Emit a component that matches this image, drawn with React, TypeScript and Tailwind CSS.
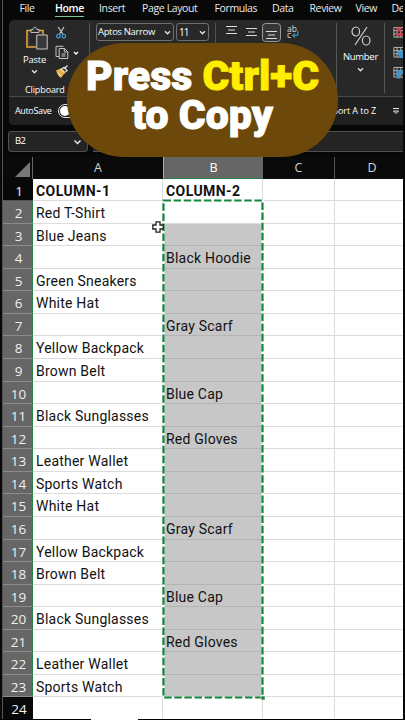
import React from 'react';

const rows: [string, string][] = [
  ['COLUMN-1', 'COLUMN-2'],
  ['Red T-Shirt', ''],
  ['Blue Jeans', ''],
  ['', 'Black Hoodie'],
  ['Green Sneakers', ''],
  ['White Hat', ''],
  ['', 'Gray Scarf'],
  ['Yellow Backpack', ''],
  ['Brown Belt', ''],
  ['', 'Blue Cap'],
  ['Black Sunglasses', ''],
  ['', 'Red Gloves'],
  ['Leather Wallet', ''],
  ['Sports Watch', ''],
  ['White Hat', ''],
  ['', 'Gray Scarf'],
  ['Yellow Backpack', ''],
  ['Brown Belt', ''],
  ['', 'Blue Cap'],
  ['Black Sunglasses', ''],
  ['', 'Red Gloves'],
  ['Leather Wallet', ''],
  ['Sports Watch', ''],
  ['', ''],
];

const Chevron = ({ className = 'h-[5px] w-[7px]' }: { className?: string }) => (
  <svg viewBox="0 0 8 6" className={`shrink-0 ${className}`} fill="none" stroke="#e6e6e6" strokeWidth="1.5">
    <path d="M1 1.5 4 4.5 7 1.5" />
  </svg>
);

const tabs: { label: string; box: string }[] = [
  { label: 'File', box: 'w-[35.5px]' },
  { label: 'Home', box: 'w-[44px] font-semibold' },
  { label: 'Insert', box: 'w-[43px]' },
  { label: 'Page Layout', box: 'w-[72.5px]' },
  { label: 'Formulas', box: 'w-[57.5px]' },
  { label: 'Data', box: 'w-[37.5px]' },
  { label: 'Review', box: 'w-[46px]' },
  { label: 'View', box: 'w-[36px]' },
  { label: 'De', box: 'w-[12px]' },
];

function Tabs() {
  return (
    <nav className="flex h-[20px] pl-[16.5px] text-[10.5px] leading-[17px] tracking-[-0.37px] text-[#e8e8e8]">
      {tabs.map((t) => (
        <div key={t.label} className={`shrink-0 whitespace-nowrap ${t.box}`}>
          <span className={t.label === 'Home' ? 'inline-block h-[17px] border-b border-[#7fc795] text-white' : ''}>
            {t.label}
          </span>
        </div>
      ))}
    </nav>
  );
}

function PasteIcon() {
  return (
    <svg viewBox="0 0 22 25" className="h-[25px] w-[22px]" fill="none">
      <path d="M1 4.5h5M12 4.5h5v4M1 4v17h9" stroke="#e8a33d" strokeWidth="1.6" />
      <path d="M3 6v13h7V9h5V6" stroke="#3a3a3a" />
      <path d="M5 6.5V3.5h2C7 .5 11 .5 11 3.5h2v3z" stroke="#bdbdbd" fill="#303030" />
      <path d="M10.8 9h10.4v14H10.8z" stroke="#c9c9c9" fill="#383838" />
    </svg>
  );
}

function ClipTools() {
  return (
    <svg viewBox="0 0 26 54" className="h-[54px] w-[26px]" fill="none">
      <path d="M3.2 1 8.4 9M9 1 4 9" stroke="#d0d0d0" strokeWidth="1.1" />
      <circle cx="3.4" cy="10.2" r="1.8" stroke="#3d95c9" strokeWidth="1.3" />
      <circle cx="8.8" cy="10.2" r="1.8" stroke="#3d95c9" strokeWidth="1.3" />
      <path d="M4 30.5H1V20.3h7.5" stroke="#c4c4c4" />
      <path d="M4.2 22.5h5.3l3.3 3.3v6.7H4.2zM9.3 22.5v3.5h3.5M6.5 28h4M6.5 30h4" stroke="#c8c8c8" />
      <path d="m19 26 2 2 2-2" stroke="#fff" strokeWidth="1.3" />
      <path d="m1 44.5 5.5-2.5 4 4-4.5 6c-2-1-4-4-5-7.5z" fill="#e5b04d" />
      <path d="m3 47 3 3M5.5 43l4.5 4.5" stroke="#fff2cf" />
      <path d="m7 43 2-1.5 3 3-1.5 1.5M10 42l2.5-2.5" stroke="#e0e0e0" strokeWidth="1.4" />
    </svg>
  );
}

function TableIcon({ accent, color }: { accent: string; color: string }) {
  return (
    <svg viewBox="0 0 12 13" className="h-[13px] w-[11px]" fill="none">
      <path d="M1 1h11M1 4.5h11M1 8h11M1 11.5h11M1 1v10.5M4.5 1v10.5M8.5 1v10.5" stroke="#bcbcbc" strokeWidth="1" />
      <path d={accent} fill={color} />
    </svg>
  );
}

function Ribbon() {
  return (
    <section className="ml-[6px] h-[105px] overflow-hidden rounded-l-[5px] bg-[#282828] text-white">
      <div className="flex h-[77px] border-b border-[#484848]">
        <div className="w-[80px] shrink-0">
          <div className="flex h-[61px]">
            <div className="flex w-[45px] flex-col items-center pl-[6px] pt-[6px]">
              <div className="pl-[5px]"><PasteIcon /></div>
              <span className="mt-[2px] text-[9.5px] leading-[14px] tracking-[-0.2px]">Paste</span>
              <Chevron className="mt-[2px] h-[5px] w-[7px]" />
            </div>
            <div className="pl-[1px] pt-[6px]"><ClipTools /></div>
          </div>
          <div className="w-[70px] pl-[16px] text-[9px] leading-[18px] tracking-[-0.12px]">Clipboard</div>
        </div>
        <div className="mt-[3px] h-[70px] w-px shrink-0 bg-[#555]" />
        <div className="flex h-[30px] shrink-0 pl-[6px]">
          <div className="mt-[3px] flex h-[18px] w-[78px] items-center justify-between rounded-[3px] border border-[#707070] pr-[2px] pl-[1px] text-[9.5px] tracking-[-0.35px]">
            <span>Aptos Narrow</span><Chevron />
          </div>
          <div className="mt-[3px] ml-[2px] flex h-[18px] w-[33px] items-center justify-between rounded-[3px] border border-[#707070] pr-[2px] pl-[2px] text-[10px] tracking-[-0.9px]">
            <span>11</span><Chevron />
          </div>
          <div className="mt-[3px] ml-[6px] h-[26px] w-px bg-[#555]" />
        </div>
        <svg viewBox="0 0 62 26" className="mt-[2px] ml-[9px] h-[26px] w-[62px] shrink-0" fill="none">
          <path d="M1 4.5h11M3 8h7M1 11.5h11" stroke="#ddd" strokeWidth="1.1" />
          <path d="M21 6.5h11M23 10h7M21 13.5h11" stroke="#ddd" strokeWidth="1.1" />
          <rect x="37.5" y="1.5" width="18" height="18" rx="3" stroke="#999" fill="#363636" />
          <path d="M41 9.5h11M43 13h7M41 16.5h11" stroke="#ddd" strokeWidth="1.1" />
        </svg>
        <div className="relative mt-[6px] w-[14px] shrink-0 text-[8.5px] leading-[6px] text-[#ddd]">
          <div>ab</div>
          <div>c</div>
          <svg viewBox="0 0 8 8" className="absolute top-[5px] left-[5px] size-[8px]" fill="none" stroke="#3d95c9" strokeWidth="1.2">
            <path d="M6 0v2.5q0 2-2 2H1m2-2.2L.8 4.5 3 6.7" />
          </svg>
        </div>
        <div className="mt-[3px] ml-[35px] h-[70px] w-px shrink-0 bg-[#555]" />
        <div className="flex w-[47px] shrink-0 flex-col items-center">
          <svg viewBox="0 0 20 20" className="mt-[6px] h-[20px] w-[20px]" fill="none" stroke="#d2d2d2" strokeWidth="1.2">
            <ellipse cx="4.8" cy="5.5" rx="3.8" ry="4.5" /><ellipse cx="15.2" cy="14.5" rx="3.8" ry="4.5" /><path d="M16 1 4 19" />
          </svg>
          <span className="mt-[3px] text-[9.5px] leading-[16px] tracking-[-0.3px]">Number</span>
          <Chevron className="mt-[2px] h-[5px] w-[7px]" />
        </div>
        <div className="mt-[3px] h-[70px] w-px shrink-0 bg-[#555]" />
        <div className="flex shrink-0 flex-col gap-[7px] pt-[6px] pl-[8px]">
          <TableIcon accent="M4 1h5v4H4zM4 7h8v3H4z" color="#d43a4a" />
          <TableIcon accent="M4.5 4.5H12v8H7z" color="#3d95c9" />
          <TableIcon accent="M4 4h8v4H8v5H4z" color="#3d95c9" />
        </div>
      </div>
      <div className="flex h-[28px] items-center rounded-bl-[5px] bg-[#202020] text-[9px]">
        <span className="w-[49px] shrink-0 pl-[6px] tracking-[-0.35px] whitespace-nowrap">AutoSave</span>
        <div className="flex h-[14px] w-[27px] shrink-0 items-center rounded-full border border-[#ddd] pl-[1px]">
          <span className="size-[10px] rounded-full bg-white" />
        </div>
        <span className="ml-[248px] w-[60px] shrink-0 tracking-[-0.05px] whitespace-nowrap">Sort A to Z</span>
        <svg viewBox="0 0 6 7" className="h-[7px] w-[6px] shrink-0" fill="none" stroke="#e5e5e5"><path d="M0 .5h6M.5 3h5L3 5.5z" /></svg>
      </div>
    </section>
  );
}

function Banner() {
  return (
    <div className="absolute top-[43px] left-[67px] flex h-[114px] w-[271px] flex-col items-center rounded-[57px] bg-[#6c480b] pt-[14px] font-[Roboto] text-[41px] leading-[39px] font-black whitespace-nowrap text-white [-webkit-text-stroke:0.9px]">
      <span>Press <span className="text-[#ffee00]">Ctrl+C</span></span>
      <span>to Copy</span>
    </div>
  );
}

const grid = 'grid grid-cols-[30px_130px_100px_72px_68px]';

function Sheet() {
  return (
    <main className="relative">
      <div className={`${grid} h-[21.5px] grid-rows-[21.5px] bg-[#0a0a0a] text-center text-[12.5px] leading-[21px] text-[#d5d5d5]`}>
        <div className="flex items-end justify-end border-r border-[#666] pr-[2px] pb-[2px]">
          <svg viewBox="0 0 16 16" className="size-[15px]"><path d="M16 0v16H0z" fill="#777" /></svg>
        </div>
        <div>A</div>
        <div className="border-b border-l border-[#a9a9a9] border-b-[#25834a] bg-[#666] text-white">B</div>
        <div className="border-r border-[#555]">C</div>
        <div className="pl-[6px]">D</div>
      </div>
      {rows.map(([a, b], i) => {
        const selected = i > 0 && i < 23;
        const line = 'border-r border-b border-[#dcdcdc] pl-[3px] whitespace-nowrap';
        return (
          <div key={i} className={`${grid} h-[22.565px] grid-rows-[22.565px] font-['Roboto'] text-[14px] leading-[25px] text-[#111] ${i === 0 ? 'font-bold tracking-[0.42px]' : 'tracking-[0.22px]'}`}>
            <div className={`border-b pl-[2px] text-center font-['Open_Sans'] text-[13.5px] leading-[24px] font-normal tracking-normal text-[#f0f0f0] ${selected ? 'border-r border-r-[#25834a] border-b-[#8c8c8c] bg-[#666]' : 'border-[#555] bg-[#080808]'}`}>{i + 1}</div>
            <div className={line}>{a}</div>
            <div className={`${line} ${i > 1 && selected ? 'border-b-[#b4b4b4] bg-[#c7c7c7]' : ''}`}>{b}</div>
            <div className={line} />
            <div className="border-b border-[#dcdcdc]" />
          </div>
        );
      })}
      <svg viewBox="0 0 104 502" className="absolute top-[41px] left-[158px] h-[502px] w-[104px]" fill="none">
        <path d="M2.5 2.5h99v497h-99z" stroke="#fff" strokeWidth="2" />
        <path d="M2.5 2.5h99v497h-99z" stroke="#13853c" strokeWidth="2.2" strokeDasharray="7.5 2.6" />
        <path d="M100 498h4v4h-4z" fill="#13853c" stroke="#fff" strokeWidth=".6" />
      </svg>
      <svg viewBox="0 0 12 12" className="absolute top-[64px] left-[149px] size-[12px]">
        <path d="M4 .8h4V4h3.2v4H8v3.2H4V8H.8V4H4z" fill="#fff" stroke="#222" strokeWidth="1.3" />
      </svg>
    </main>
  );
}

export default function App() {
  return (
    <div className="relative h-[720px] w-[405px] overflow-hidden bg-[#080808] pr-[2px] pl-[2px] font-['Open_Sans',sans-serif]">
      <div className="h-full overflow-hidden border-l border-[#555]">
        <Tabs />
        <Ribbon />
        <div className="mt-[6px] mb-[5px] flex h-[21px] pl-[5px]">
          <div className="flex w-[80px] items-center justify-between rounded-[3px] border border-[#505050] bg-[#242424] pr-[5px] pl-[6px] text-[9.5px] tracking-[-0.6px] text-white">
            <span>B2</span><Chevron className="h-[6px] w-[9px]" />
          </div>
          <div className="ml-[5px] flex-1 border-y border-[#505050] bg-[#242424]" />
        </div>
        <div className="bg-white"><Sheet /></div>
      </div>
      <Banner />
      <div className="absolute inset-x-0 bottom-0 flex h-px justify-between">
        <span className="w-[91px] bg-black" />
        <span className="w-[47px] bg-white" />
        <span className="flex-1 bg-black" />
      </div>
    </div>
  );
}
